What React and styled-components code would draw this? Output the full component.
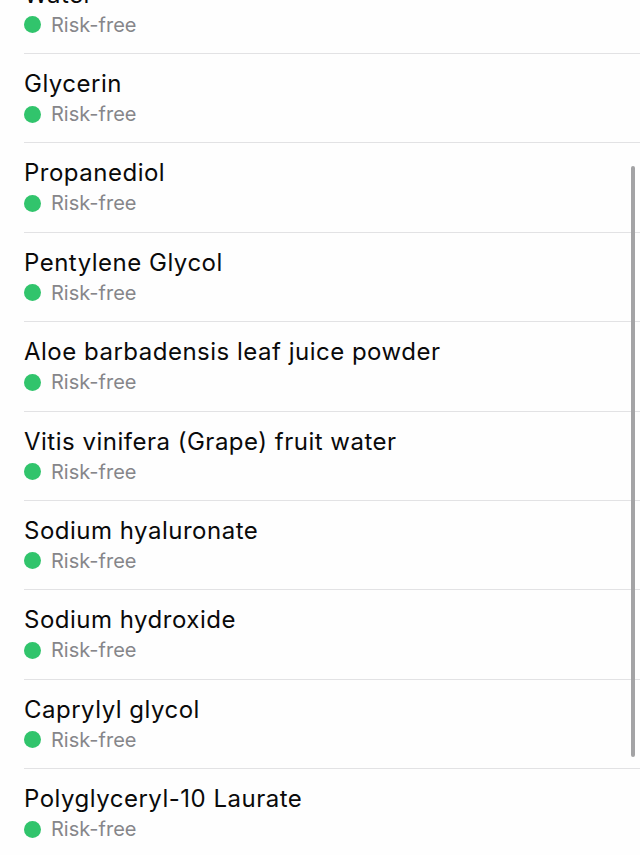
import React from "react";
import styled, { createGlobalStyle } from "styled-components";

const Global = createGlobalStyle`
  html, body { margin: 0; padding: 0; background: #fefefe; overflow: hidden; }
  body { font-family: Inter, "Open Sans", "Liberation Sans", sans-serif; -webkit-font-smoothing: antialiased; }
`;

const Screen = styled.div`
  position: relative;
  width: 640px;
  height: 855px;
  overflow: hidden;
  background: #fefefe;
`;

const List = styled.ul`
  list-style: none;
  margin: -35.4px 0 0 0;
  padding: 0;
`;

const Row = styled.li`
  box-sizing: border-box;
  height: 89.4px;
  margin-left: 24px;
  padding-top: 15px;
  border-bottom: 1px solid #e2e2e4;
  display: flex;
  flex-direction: column;
`;

const Name = styled.div`
  font-size: 24px;
  line-height: 29px;
  color: #0a0a0a;
  letter-spacing: 0.5px;
`;

const Risk = styled.div`
  display: flex;
  align-items: center;
  gap: 10px;
  margin-top: 3px;
  font-size: 20px;
  line-height: 26px;
  color: #86868a;
`;

const Dot = styled.span`
  width: 17px;
  height: 17px;
  border-radius: 50%;
  background: ${(p) => p.$color};
  flex: none;
`;

const ScrollThumb = styled.div`
  position: absolute;
  right: 5px;
  top: 166px;
  width: 4px;
  height: 591px;
  border-radius: 2px;
  background: #a3a3a5;
`;

const items = [
  "Water",
  "Glycerin",
  "Propanediol",
  "Pentylene Glycol",
  "Aloe barbadensis leaf juice powder",
  "Vitis vinifera (Grape) fruit water",
  "Sodium hyaluronate",
  "Sodium hydroxide",
  "Caprylyl glycol",
  "Polyglyceryl-10 Laurate",
];

export default function App() {
  return (
    <Screen>
      <Global />
      <List>
        {items.map((name) => (
          <Row key={name}>
            <Name>{name}</Name>
            <Risk>
              <Dot $color="#31c46c" />
              Risk-free
            </Risk>
          </Row>
        ))}
      </List>
      <ScrollThumb />
    </Screen>
  );
}
